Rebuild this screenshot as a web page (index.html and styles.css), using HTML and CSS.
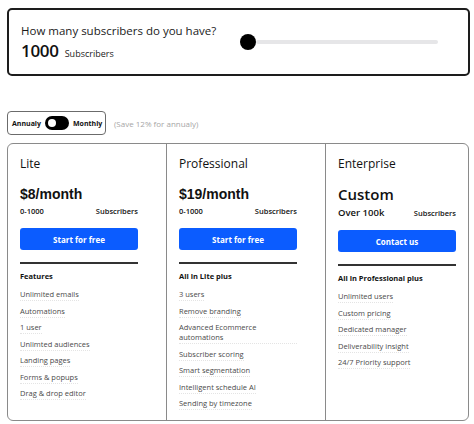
FILE: index.html
```html
<!DOCTYPE html>
<html>
<head>
<meta charset="utf-8">
<link rel="stylesheet" href="styles.css">
</head>
<body>
<div class="page">
  <section class="counter">
    <div class="counter-text">
      <div class="question">How many subscribers do you have?</div>
      <div class="amount"><span class="num">1000</span><span class="unit">Subscribers</span></div>
    </div>
    <div class="slider"><span class="thumb"></span><span class="track"></span></div>
  </section>

  <div class="billing">
    <div class="switch-box">
      <span class="lbl">Annualy</span>
      <span class="toggle"><span class="knob"></span></span>
      <span class="lbl">Monthly</span>
    </div>
    <span class="save">(Save 12% for annualy)</span>
  </div>

  <div class="plans">
    <div class="plan">
      <div class="name">Lite</div>
      <div class="price">$8/month</div>
      <div class="range"><span class="r">0-1000</span><span class="s">Subscribers</span></div>
      <div class="btn">Start for free</div>
      <div class="rule"></div>
      <div class="feat-head">Features</div>
      <ul class="feats">
        <li>Unlimited emails</li>
        <li>Automations</li>
        <li>1 user</li>
        <li>Unlimted audiences</li>
        <li>Landing pages</li>
        <li>Forms &amp; popups</li>
        <li>Drag &amp; drop editor</li>
      </ul>
    </div>
    <div class="plan">
      <div class="name">Professional</div>
      <div class="price">$19/month</div>
      <div class="range"><span class="r">0-1000</span><span class="s">Subscribers</span></div>
      <div class="btn">Start for free</div>
      <div class="rule"></div>
      <div class="feat-head">All in Lite plus</div>
      <ul class="feats">
        <li>3 users</li>
        <li>Remove branding</li>
        <li>Advanced Ecommerce automations</li>
        <li>Subscriber scoring</li>
        <li>Smart segmentation</li>
        <li>Intelligent schedule AI</li>
        <li>Sending by timezone</li>
      </ul>
    </div>
    <div class="plan ent">
      <div class="name">Enterprise</div>
      <div class="price custom">Custom</div>
      <div class="range"><span class="r big">Over 100k</span><span class="s">Subscribers</span></div>
      <div class="btn">Contact us</div>
      <div class="rule"></div>
      <div class="feat-head">All in Professional plus</div>
      <ul class="feats">
        <li>Unlimited users</li>
        <li>Custom pricing</li>
        <li>Dedicated manager</li>
        <li>Deliverability insight</li>
        <li>24/7 Priority support</li>
      </ul>
    </div>
  </div>
</div>
</body>
</html>
```
FILE: styles.css
```css
* { box-sizing: border-box; }
html, body { margin: 0; padding: 0; background: #fff; }
body {
  font-family: "Open Sans", "DejaVu Sans", sans-serif;
  color: #111;
}
.page { padding: 8px 4px 0 7px; }

.counter {
  width: 463px;
  height: 68px;
  border: 2px solid #1d1d1d;
  border-radius: 5px;
  display: flex;
  align-items: center;
  padding: 0 0 0 12px;
}
.counter-text { width: 219px; padding-top: 0; }
.question { font-size: 11.5px; color: #1a1a1a; line-height: 16px; }
.amount { display: flex; align-items: baseline; margin-top: 0; }
.num { font-size: 17px; font-weight: 600; letter-spacing: -0.3px; }
.unit { font-size: 9px; margin-left: 6px; color: #222; }
.slider {
  display: flex;
  align-items: center;
}
.thumb {
  width: 16px; height: 16px; border-radius: 50%;
  background: #000;
  flex: none;
}
.track {
  width: 182px; height: 4px; background: #e6e6e8; border-radius: 2px;
}

.billing {
  display: flex;
  align-items: center;
  margin-top: 35px;
}
.switch-box {
  width: 99px; height: 24px;
  border: 1px solid #6b6b6b;
  border-radius: 4px;
  display: flex;
  align-items: center;
  padding: 0 0 0 4px;
}
.lbl { font-size: 7px; font-weight: 700; color: #111; }
.toggle {
  width: 24px; height: 14px; border-radius: 7px; background: #000;
  display: flex; align-items: center; padding-left: 3px;
  margin: 0 4px 0 4px;
}
.knob { width: 8px; height: 8px; border-radius: 50%; background: #fff; }
.save { font-size: 8px; color: #a6a6a6; margin-left: 8px; }

.plans {
  margin-top: 8px;
  width: 462px;
  height: 278px;
  border: 1px solid #8a8a8a;
  border-radius: 6px;
  display: grid;
  grid-template-columns: 159px 159px 1fr;
}
.plan {
  padding: 12px 12px 0 12px;
  border-right: 1px solid #8a8a8a;
}
.plan.ent { border-right: none; }
.name { font-size: 12px; line-height: 16px; color: #111; }
.price {
  font-family: "Liberation Sans", Arial, sans-serif;
  font-size: 14px; font-weight: 700; margin-top: 13px; line-height: 18px;
}
.price.custom {
  font-family: "Open Sans", sans-serif;
  font-weight: 600; font-size: 15px;
}
.range {
  display: flex; justify-content: space-between; align-items: baseline;
  margin-top: 3px; width: 118px;
}
.r { font-size: 7.5px; font-weight: 600; }
.r.big { font-size: 9.5px; font-weight: 600; }
.s { font-size: 7.5px; font-weight: 600; }
.btn {
  width: 118px; height: 22px; margin-top: 12px;
  background: #0b5cff; border-radius: 3px;
  color: #fff; font-size: 8px; font-weight: 700;
  display: flex; align-items: center; justify-content: center;
}
.ent .btn { margin-top: 11px; }
.rule { width: 118px; height: 2px; background: #333; margin-top: 12px; }
.feat-head { font-size: 7.5px; font-weight: 700; margin-top: 6px; line-height: 12px; }
.feats { list-style: none; margin: 7px 0 0; padding: 0; width: 118px; }
.feats li {
  font-size: 7.5px; color: #4a4a4a; line-height: 10px;
  padding: 0 0 1px;
  margin-bottom: 4.5px;
  border-bottom: 1px dotted #e4e4e4;
  width: fit-content;
}
```
